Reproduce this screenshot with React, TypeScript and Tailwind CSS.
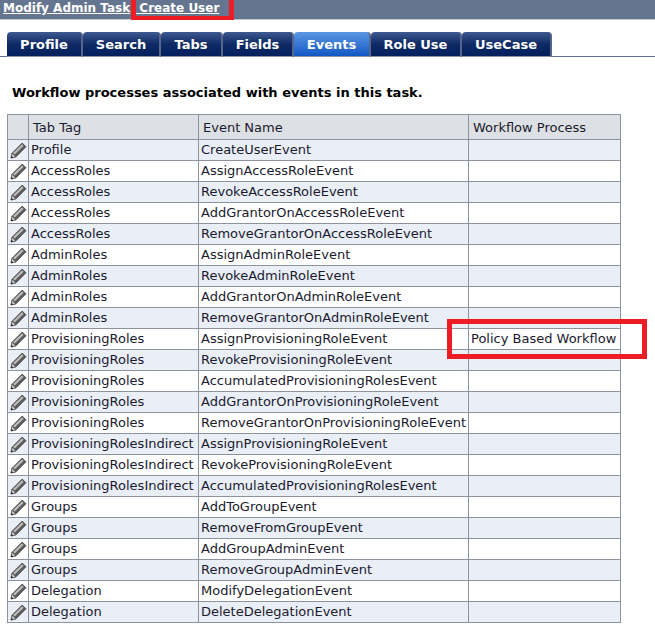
const rows = [
  ["Profile", "CreateUserEvent", ""],
  ["AccessRoles", "AssignAccessRoleEvent", ""],
  ["AccessRoles", "RevokeAccessRoleEvent", ""],
  ["AccessRoles", "AddGrantorOnAccessRoleEvent", ""],
  ["AccessRoles", "RemoveGrantorOnAccessRoleEvent", ""],
  ["AdminRoles", "AssignAdminRoleEvent", ""],
  ["AdminRoles", "RevokeAdminRoleEvent", ""],
  ["AdminRoles", "AddGrantorOnAdminRoleEvent", ""],
  ["AdminRoles", "RemoveGrantorOnAdminRoleEvent", ""],
  ["ProvisioningRoles", "AssignProvisioningRoleEvent", "Policy Based Workflow"],
  ["ProvisioningRoles", "RevokeProvisioningRoleEvent", ""],
  ["ProvisioningRoles", "AccumulatedProvisioningRolesEvent", ""],
  ["ProvisioningRoles", "AddGrantorOnProvisioningRoleEvent", ""],
  ["ProvisioningRoles", "RemoveGrantorOnProvisioningRoleEvent", ""],
  ["ProvisioningRolesIndirect", "AssignProvisioningRoleEvent", ""],
  ["ProvisioningRolesIndirect", "RevokeProvisioningRoleEvent", ""],
  ["ProvisioningRolesIndirect", "AccumulatedProvisioningRolesEvent", ""],
  ["Groups", "AddToGroupEvent", ""],
  ["Groups", "RemoveFromGroupEvent", ""],
  ["Groups", "AddGroupAdminEvent", ""],
  ["Groups", "RemoveGroupAdminEvent", ""],
  ["Delegation", "ModifyDelegationEvent", ""],
  ["Delegation", "DeleteDelegationEvent", ""],
];

const tabs = [
  { name: "Profile", w: "w-[76px]" },
  { name: "Search", w: "w-[78px]" },
  { name: "Tabs", w: "w-[62px]" },
  { name: "Fields", w: "w-[71px]" },
  { name: "Events", w: "w-[77px]", active: true },
  { name: "Role Use", w: "w-[91px]" },
  { name: "UseCase", w: "w-[90px]" },
];

function Pencil() {
  return (
    <svg width="17" height="17" viewBox="0 0 16 16" className="block">
      <path d="M1 15 L2 10.5 L11.5 1 L15 4.5 L5.5 14 Z" fill="#5e5e5e" stroke="#3c3c3c" strokeWidth="0.8" />
      <path d="M3 10.4 L11.4 2.2 L12.8 3.6 L4.4 11.8 Z" fill="#bdbdbd" />
      <path d="M1 15 L2 10.8 L5.2 14 Z" fill="#dedede" stroke="#4a4a4a" strokeWidth="0.5" />
      <path d="M1 15 L1.5 13 L3 14.5 Z" fill="#151515" />
    </svg>
  );
}

export default function App() {
  return (
    <div className="relative w-[655px] h-[642px] bg-white overflow-hidden font-['DejaVu_Sans',Verdana,sans-serif]">
      <div className="h-5 bg-[#66758f] border-b border-[#c4c8d0] flex items-start text-[12px] font-bold leading-[16px] text-white">
        <a className="ml-[3px] underline">Modify Admin Task</a>
        <a className="ml-[5px] underline">{"\u00a0Create User"}</a>
      </div>

      <div className="mt-3 h-[25px] flex pl-[7px] border-b border-[#5f6fa8]">
        {tabs.map((t) => (
          <div
            key={t.name}
            className={`${t.w} h-[25px] pt-px rounded-t-[4px] border-r-2 border-b border-r-[#56658a] border-b-[#8d94a3] flex items-center justify-center text-[13px] font-bold text-white ${
              t.active
                ? "bg-gradient-to-b from-[#5b97e3] to-[#0f57c4]"
                : "bg-gradient-to-b from-[#3f5a8f] via-[#0f2a66] to-[#04205c]"
            }`}
          >
            {t.name}
          </div>
        ))}
      </div>

      <div className="mt-[28px] ml-3 text-[13px] font-bold leading-[16px] text-black">
        Workflow processes associated with events in this task.
      </div>

      <table className="mt-[13px] ml-[7px] w-[613px] table-fixed border-collapse text-[13px] leading-[16px] text-[#1a1a2e]">
        <colgroup>
          <col className="w-[21px]" />
          <col className="w-[170px]" />
          <col className="w-[270px]" />
          <col className="w-[152px]" />
        </colgroup>
        <thead>
          <tr className="h-[25px] bg-[#dde0e4]">
            <th className="border border-[#8d939c]" />
            <th className="border border-[#8d939c] pl-1 pt-px text-left font-normal">Tab Tag</th>
            <th className="border border-[#8d939c] pl-1 pt-px text-left font-normal">Event Name</th>
            <th className="border border-[#8d939c] pl-1 pt-px text-left font-normal">Workflow Process</th>
          </tr>
        </thead>
        <tbody>
          {rows.map((r, i) => (
            <tr key={i} className={`h-[21px] ${i % 2 === 0 ? "bg-[#e9eef7]" : "bg-white"}`}>
              <td className="border border-[#8d939c] pl-[2px]">
                <Pencil />
              </td>
              <td className="border border-[#8d939c] pl-[2px] whitespace-nowrap">{r[0]}</td>
              <td className="border border-[#8d939c] pl-[2px] whitespace-nowrap">{r[1]}</td>
              <td className="border border-[#8d939c] pl-[2px] whitespace-nowrap">{r[2]}</td>
            </tr>
          ))}
        </tbody>
      </table>

      <div className="absolute left-[131px] top-0 w-[103px] h-5 border-x-[5px] border-b-[4px] border-[#ee1c25]" />
      <div className="absolute left-[447px] top-[319px] w-[200px] h-[40px] border-[5px] border-[#ee1c25]" />
    </div>
  );
}
